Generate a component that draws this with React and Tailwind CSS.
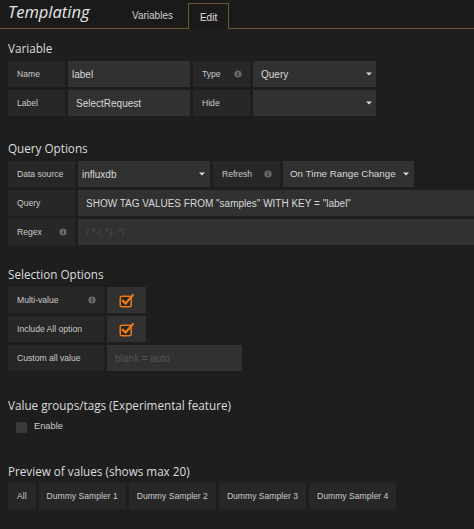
import React from "react";

const Info = () => (
  <svg width="8" height="8" viewBox="0 0 8 8" className="shrink-0">
    <circle cx="4" cy="4" r="3.6" fill="#6a6a6a" />
    <rect x="3.4" y="3.4" width="1.2" height="2.8" fill="#262626" />
    <rect x="3.4" y="1.8" width="1.2" height="1.1" fill="#262626" />
  </svg>
);

const Caret = () => (
  <svg width="6" height="4" viewBox="0 0 6 4" className="shrink-0">
    <path d="M0 0.5 L6 0.5 L3 3.5 Z" fill="#d8d9da" />
  </svg>
);

const Check = () => (
  <svg width="16" height="15" viewBox="0 0 16 15">
    <rect x="1.2" y="3.2" width="11" height="10.5" rx="2" fill="#2a2522" stroke="#eb7b18" strokeWidth="1.5" />
    <path d="M3.6 7.6 L6.6 10.6 L13.8 2.2" fill="none" stroke="#eb7b18" strokeWidth="2.3" strokeLinecap="round" strokeLinejoin="round" />
  </svg>
);

const Label = ({ w, children, info }) => (
  <div className={`${w} shrink-0 h-[26px] bg-[#272727] flex items-center justify-between pl-[9px] pr-[8px] text-[8.6px] text-[#c9cacb]`}>
    <span>{children}</span>
    {info && <Info />}
  </div>
);

const Heading = ({ className, children }) => (
  <div className={`${className} h-[18px] leading-[18px] text-[11.7px] text-[#dcdcdc] font-['Open_Sans',sans-serif] whitespace-nowrap`}>
    {children}
  </div>
);

export default function App() {
  return (
    <div className="w-[474px] h-[529px] overflow-hidden bg-[#1f1e1f] font-['Liberation_Sans',Arial,sans-serif]">
      <div className="h-[29px] bg-[#1b1a1a] border-b border-[#6b5b2b] flex items-start">
        <div className="w-[121px] shrink-0 pl-[8px] leading-[24px] text-[16.5px] italic text-[#e6e6e6] font-['Open_Sans',sans-serif]">
          Templating
        </div>
        <div className="flex gap-[4px] mt-[3px]">
          <div className="h-[26px] px-[11px] leading-[25px] text-[10px] text-[#d0d1d2]">Variables</div>
          <div className="h-[26px] px-[11px] leading-[27px] text-[10px] text-[#e0e0e0] border border-b-0 border-[#6b5b2b] bg-[#1b1a1a]">
            Edit
          </div>
        </div>
      </div>

      <div className="px-[8px]">
        <Heading className="mt-[10px] mb-[4px]">Variable</Heading>
        <div className="flex flex-col gap-[3px]">
          <div className="flex gap-[3px]">
            <Label w="w-[57px]">Name</Label>
            <div className="w-[122px] h-[26px] bg-[#313131] flex items-center pl-[4px] text-[10px] text-[#d8d9da]">label</div>
            <Label w="w-[57px]" info>Type</Label>
            <div className="w-[123px] h-[26px] bg-[#313131] flex items-center justify-between pl-[8px] pr-[4px] text-[10px] text-[#d8d9da]">
              <span>Query</span>
              <Caret />
            </div>
          </div>
          <div className="flex gap-[3px]">
            <Label w="w-[57px]">Label</Label>
            <div className="w-[122px] h-[26px] bg-[#313131] flex items-center pl-[8px] text-[10px] text-[#d8d9da]">SelectRequest</div>
            <Label w="w-[57px]">Hide</Label>
            <div className="w-[123px] h-[26px] bg-[#313131] flex items-center justify-end pr-[4px]">
              <Caret />
            </div>
          </div>
        </div>

        <Heading className="mt-[23px] mb-[4px]">Query Options</Heading>
        <div className="flex flex-col gap-[3px]">
          <div className="flex gap-[3px]">
            <Label w="w-[67px]">Data source</Label>
            <div className="w-[132px] h-[26px] bg-[#313131] flex items-center justify-between pl-[4px] pr-[5px] text-[10px] text-[#d8d9da]">
              <span>influxdb</span>
              <Caret />
            </div>
            <Label w="w-[67px]" info>Refresh</Label>
            <div className="w-[131px] h-[26px] bg-[#313131] flex items-center justify-between pl-[7px] pr-[5px] text-[9.8px] text-[#d8d9da] whitespace-nowrap">
              <span>On Time Range Change</span>
              <Caret />
            </div>
          </div>
          <div className="flex gap-[3px]">
            <Label w="w-[67px]">Query</Label>
            <div className="w-[400px] shrink-0 h-[26px] bg-[#313131] flex items-center pl-[8px] text-[10px] text-[#d8d9da] whitespace-nowrap">
              SHOW TAG VALUES FROM "samples" WITH KEY = "label"
            </div>
          </div>
          <div className="flex gap-[3px]">
            <Label w="w-[67px]" info>Regex</Label>
            <div className="w-[400px] shrink-0 h-[26px] bg-[#313131] flex items-center pl-[8px] text-[10px] text-[#4a4a4a] whitespace-nowrap">
              /.*-(.*)-.*/
            </div>
          </div>
        </div>

        <Heading className="mt-[20px] mb-[4px]">Selection Options</Heading>
        <div className="flex flex-col gap-[3px]">
          <div className="flex gap-[3px]">
            <Label w="w-[96px]" info>Multi-value</Label>
            <div className="w-[39px] h-[26px] bg-[#313131] flex items-center justify-center">
              <Check />
            </div>
          </div>
          <div className="flex gap-[3px]">
            <Label w="w-[96px]">Include All option</Label>
            <div className="w-[39px] h-[26px] bg-[#313131] flex items-center justify-center">
              <Check />
            </div>
          </div>
          <div className="flex gap-[3px]">
            <Label w="w-[96px]">Custom all value</Label>
            <div className="w-[135px] h-[26px] bg-[#313131] flex items-center pl-[8px] text-[10px] text-[#555555]">
              blank = auto
            </div>
          </div>
        </div>

        <Heading className="mt-[25px]">Value groups/tags (Experimental feature)</Heading>
        <div className="mt-[6px] h-[14px] flex items-center pl-[8px] gap-[7px]">
          <div className="w-[11px] h-[11px] rounded-[2px] bg-[#3a3a3a]" />
          <span className="text-[9.3px] text-[#c9cacb]">Enable</span>
        </div>

        <Heading className="mt-[28px] mb-[3px]">Preview of values (shows max 20)</Heading>
        <div className="flex gap-[3px]">
          <div className="h-[26px] px-[9px] bg-[#272727] flex items-center text-[8.6px] text-[#c9cacb]">All</div>
          {["Dummy Sampler 1", "Dummy Sampler 2", "Dummy Sampler 3", "Dummy Sampler 4"].map((t) => (
            <div key={t} className="h-[26px] px-[8px] bg-[#272727] flex items-center text-[8.6px] text-[#c9cacb] whitespace-nowrap">
              {t}
            </div>
          ))}
        </div>
      </div>
    </div>
  );
}
